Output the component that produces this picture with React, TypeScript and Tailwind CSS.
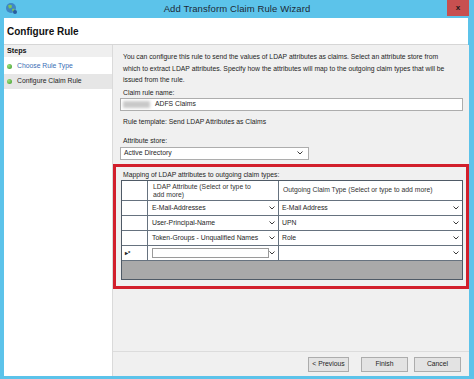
import React from "react";

const Chevron = () => (
  <svg width="6" height="4" viewBox="0 0 6 4" className="shrink-0">
    <polyline points="0.5,0.5 3,3 5.5,0.5" fill="none" stroke="#3a3a3a" strokeWidth="1" />
  </svg>
);

const Dot = () => (
  <span className="inline-block w-[5px] h-[5px] rounded-full bg-[radial-gradient(circle_at_35%_35%,#9be07a,#3c9a2c)] shrink-0" />
);

const DataRow = ({ a, b, marker }: { a: string; b: string; marker?: boolean }) => (
  <div className="flex h-[15px] bg-white border-b border-[#66727f]">
    <div className="w-[26px] border-r border-[#66727f] flex items-center pl-[3px] text-[6px] font-bold text-[#222]">
      {marker ? "▸*" : ""}
    </div>
    <div className="w-[131px] border-r border-[#66727f] flex items-center justify-between pl-[4px] pr-[3px]">
      {marker ? (
        <div className="w-[119px] h-[10px] border border-[#9a9a9a] bg-white" />
      ) : (
        <span className="whitespace-nowrap">{a}</span>
      )}
      <Chevron />
    </div>
    <div className="flex-1 flex items-center justify-between pl-[3px] pr-[3px]">
      <span className="whitespace-nowrap">{b}</span>
      <Chevron />
    </div>
  </div>
);

export default function App() {
  return (
    <div className="w-[474px] h-[379px] bg-[#5cc3ea] flex flex-col overflow-hidden text-[#1e1e1e] font-['Liberation_Sans',Arial,sans-serif]">
      {/* Title bar */}
      <div className="relative h-[18px] flex items-center justify-center shrink-0">
        <svg className="absolute left-[5px] top-[2px]" width="13" height="13" viewBox="0 0 13 13">
          <circle cx="6" cy="6" r="5" fill="#3f86c4" />
          <path d="M3 3.5 Q5 2 7 3.5 L6.5 6 L4 6.5 Z" fill="#7cc35a" />
          <path d="M7 7 L9.5 6.5 L9 9.5 L7.5 9.5 Z" fill="#7cc35a" />
          <circle cx="10" cy="10" r="2" fill="#2a5e9e" />
        </svg>
        <span className="text-[9.5px] text-[#1d2a36] tracking-[0.1px]">Add Transform Claim Rule Wizard</span>
        <div className="absolute right-[5px] top-0 w-[22px] h-[16px] bg-[#c75050] flex items-center justify-center text-[8px] font-bold text-[#1a1a1a] leading-none">
          x
        </div>
      </div>

      {/* Client */}
      <div className="flex-1 ml-[4px] mr-[6px] mb-[3px] bg-white flex flex-col">
        <div className="h-[27px] shrink-0 flex items-center pl-[3px] border-b border-[#d6d6d6]">
          <span className="text-[10px] font-bold text-[#111]">Configure Rule</span>
        </div>
        <div className="flex-1 flex">
          {/* Steps */}
          <div className="w-[109px] shrink-0 bg-white border-r border-[#dadada] flex flex-col text-[6.8px]">
            <div className="h-[12px] bg-[#efefef] flex items-center pl-[3px] font-bold text-[7.2px] text-[#111]">Steps</div>
            <div className="h-[15px] mt-[2px] flex items-center gap-[5px] pl-[3px]">
              <Dot />
              <span className="text-[#3a6eb5]">Choose Rule Type</span>
            </div>
            <div className="h-[15px] flex items-center gap-[5px] pl-[3px] bg-[#e6e6e6]">
              <Dot />
              <span>Configure Claim Rule</span>
            </div>
          </div>

          {/* Right panel */}
          <div className="flex-1 bg-[#f0f0f0] flex flex-col text-[6.8px]">
            <div className="flex flex-col pt-[6px]">
              <div className="pl-[10px] leading-[11.5px] whitespace-nowrap">
                <div>You can configure this rule to send the values of LDAP attributes as claims. Select an attribute store from</div>
                <div>which to extract LDAP attributes. Specify how the attributes will map to the outgoing claim types that will be</div>
                <div>issued from the rule.</div>
              </div>
              <div className="pl-[10px] leading-[11px] mt-[1px]">Claim rule name:</div>
              <div className="ml-[7px] mr-[6px] h-[13px] bg-white border border-[#adadad] flex items-center pl-[2px]">
                <div className="w-[27px] h-[7px] bg-[#c8c8c8] blur-[1.5px]" />
                <span className="ml-[5px]">ADFS Claims</span>
              </div>
              <div className="pl-[10px] leading-[12px] mt-[5px]">Rule template: Send LDAP Attributes as Claims</div>
              <div className="pl-[10px] leading-[12px] mt-[7px]">Attribute store:</div>
              <div className="ml-[7px] w-[189px] h-[13px] bg-white border border-[#adadad] flex items-center justify-between pl-[3px] pr-[5px]">
                <span>Active Directory</span>
                <Chevron />
              </div>

              {/* Red annotation box */}
              <div className="mt-[4px] border-[3px] border-[#d21f2c] pt-[2px] pb-[6px] pl-[5px] pr-[3px]">
                <div className="pl-[2px] leading-[11.5px]">Mapping of LDAP attributes to outgoing claim types:</div>
                <div className="w-[342px] border border-[#4f5a66] bg-[#a9a9a9] flex flex-col">
                  <div className="flex h-[20px] bg-white border-b border-[#66727f] text-[#333]">
                    <div className="w-[26px] border-r border-[#66727f]" />
                    <div className="w-[131px] border-r border-[#66727f] flex flex-col justify-center pl-[5px] leading-[7.5px]">
                      <span>LDAP Attribute (Select or type to</span>
                      <span>add more)</span>
                    </div>
                    <div className="flex-1 flex items-center pl-[4px]">
                      Outgoing Claim Type (Select or type to add more)
                    </div>
                  </div>
                  <DataRow a="E-Mail-Addresses" b="E-Mail Address" />
                  <DataRow a="User-Principal-Name" b="UPN" />
                  <DataRow a="Token-Groups - Unqualified Names" b="Role" />
                  <DataRow a="" b="" marker />
                  <div className="h-[18px] bg-[#a9a9a9]" />
                </div>
              </div>
            </div>
            <div className="flex-1" />
            <div className="h-[25px] border-t border-[#dcdcdc] flex items-center justify-end pr-[8px] gap-[6px]">
              <button className="w-[41px] h-[15px] bg-[#e3e3e3] border border-[#acacac] text-[6.8px] mr-[6px]">&lt; Previous</button>
              <button className="w-[47px] h-[15px] bg-[#e3e3e3] border border-[#acacac] text-[6.8px]">Finish</button>
              <button className="w-[47px] h-[15px] bg-[#e3e3e3] border border-[#acacac] text-[6.8px]">Cancel</button>
            </div>
          </div>
        </div>
      </div>
    </div>
  );
}
